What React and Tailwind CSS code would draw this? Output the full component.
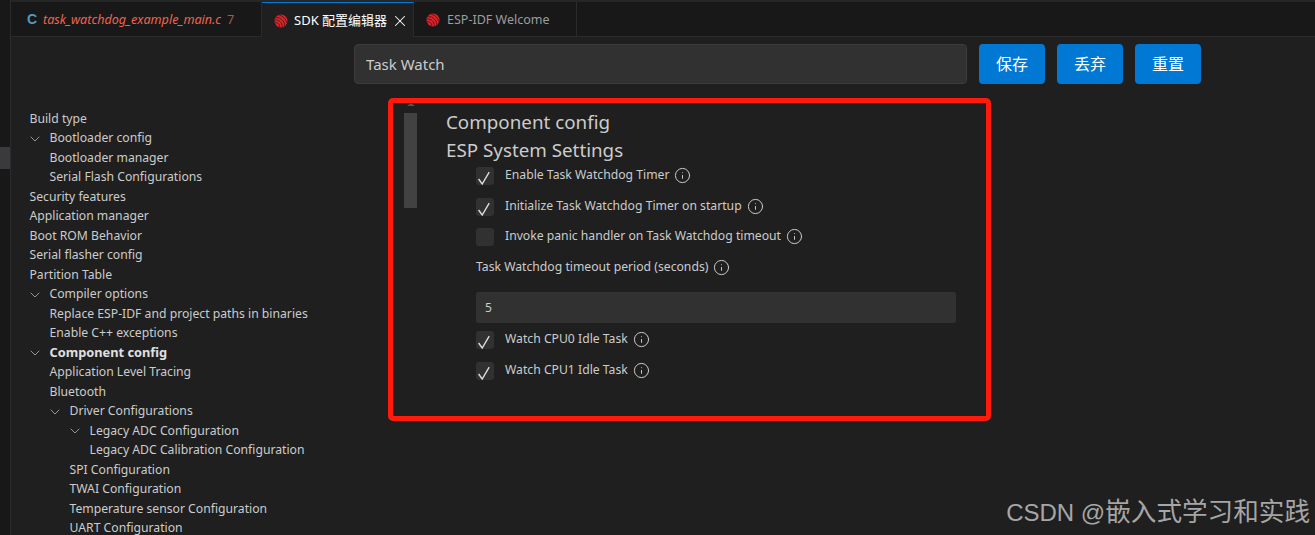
import React from 'react';
import { ChevronDown, Info, X } from 'lucide-react';

const FONT = "font-['Noto_Sans','Noto_Sans_CJK_SC',sans-serif]";

// indent classes per tree level
const LEVELS = ['pl-[18.5px]', 'pl-[38.5px]', 'pl-[58.5px]', 'pl-[78.5px]'];

const TREE = [
  { label: 'Build type', level: 0 },
  { label: 'Bootloader config', level: 1, open: true },
  { label: 'Bootloader manager', level: 1 },
  { label: 'Serial Flash Configurations', level: 1 },
  { label: 'Security features', level: 0 },
  { label: 'Application manager', level: 0 },
  { label: 'Boot ROM Behavior', level: 0 },
  { label: 'Serial flasher config', level: 0 },
  { label: 'Partition Table', level: 0 },
  { label: 'Compiler options', level: 1, open: true },
  { label: 'Replace ESP-IDF and project paths in binaries', level: 1 },
  { label: 'Enable C++ exceptions', level: 1 },
  { label: 'Component config', level: 1, open: true, bold: true },
  { label: 'Application Level Tracing', level: 1 },
  { label: 'Bluetooth', level: 1 },
  { label: 'Driver Configurations', level: 2, open: true },
  { label: 'Legacy ADC Configuration', level: 3, open: true },
  { label: 'Legacy ADC Calibration Configuration', level: 3 },
  { label: 'SPI Configuration', level: 2 },
  { label: 'TWAI Configuration', level: 2 },
  { label: 'Temperature sensor Configuration', level: 2 },
  { label: 'UART Configuration', level: 2 },
];

// Espressif mark, red disc with dark arcs
const EspLogo = () => (
  <svg width="14" height="14" viewBox="0 0 14 14" className="shrink-0">
    <circle cx="7" cy="7" r="6.5" fill="#d9262c" />
    <g fill="none" stroke="#5c1214" strokeWidth="0.9" strokeLinecap="round">
      <path d="M2.5 3.6C6.8 3.2 10.8 7 10.5 11.5" />
      <path d="M1.4 6C5 5.6 8.4 8.6 8.2 12.6" />
      <path d="M1.5 8.6C3.8 8.4 5.8 10.2 5.8 12.6" />
      <path d="M5.5 1.2C9 1.8 12 4.8 12.6 8.5" />
    </g>
  </svg>
);

const Check = () => (
  <svg width="18" height="18" viewBox="0 0 18 18" fill="none" className="block overflow-visible">
    <path d="M2.6 12 L6.2 17 L13.2 5.2" stroke="#dddddd" strokeWidth="1.4" />
  </svg>
);

const CheckRow = ({ label, checked, className }) => (
  <div className={`flex items-center h-[18px] ${className}`}>
    <span className="w-[18px] h-[18px] bg-[#313131] rounded-[3px] shrink-0">
      {checked && <Check />}
    </span>
    <div className="flex items-center pb-[2px] ml-[11px] gap-[5px]">
      <span className="text-[12.2px] text-[#cccccc] whitespace-nowrap">{label}</span>
      <Info size={17} strokeWidth={1.4} className="text-[#cccccc] shrink-0" />
    </div>
  </div>
);

const App = () => {
  return (
    <div className={`relative flex h-[535px] w-[1315px] overflow-hidden bg-[#1f1f1f] ${FONT}`}>
      {/* Left strip */}
      <div className="w-[11px] shrink-0 bg-[#181818] border-r border-[#2b2b2b] pt-[147px]">
        <div className="h-[22px] bg-[#3a3a3d] w-[10px]"></div>
      </div>

      <div className="flex-1 min-w-0 flex flex-col">
        {/* Tabs */}
        <div className="flex h-[37px] shrink-0 bg-[#181818] border-t-2 border-b border-t-[#262626] border-b-[#2b2b2b]">
          <div className="flex items-center w-[251px] pl-[16px] pt-[2px] border-r border-[#2b2b2b]">
            <span className="w-[16px] text-[14px] leading-none font-bold text-[#519aba] font-['Liberation_Sans',sans-serif] -mt-[3px]">C</span>
            <span className="text-[12.6px] italic text-[#f0634f] whitespace-nowrap">task_watchdog_example_main.c</span>
            <span className="ml-[6px] text-[12.5px] text-[#a8584e]">7</span>
          </div>
          <div className="flex items-center w-[152px] -mb-px pl-[12px] pt-[2px] bg-[#1f1f1f] border-t border-[#0078d4] border-r-[#2b2b2b] border-r">
            <EspLogo />
            <span className="ml-[6px] text-[13px] text-white whitespace-nowrap">SDK 配置编辑器</span>
            <X size={18} strokeWidth={1.4} className="ml-[4px] text-white" />
          </div>
          <div className="flex items-center w-[163px] pl-[12px] pt-[2px] border-r border-[#2b2b2b]">
            <EspLogo />
            <span className="ml-[7px] text-[12.5px] text-[#9d9d9d] whitespace-nowrap">ESP-IDF Welcome</span>
          </div>
        </div>

        {/* Search and actions */}
        <div className="flex h-[61px] shrink-0 pt-[7px] pl-[343px] gap-[12px]">
          <input
            readOnly
            value="Task Watch"
            className="w-[613px] h-[40px] px-[11px] bg-[#313131] border border-[#3c3c3c] rounded-[4px] text-[15px] text-[#cccccc] outline-none"
          />
          {['保存', '丢弃', '重置'].map((b) => (
            <button key={b} className="w-[66px] h-[40px] bg-[#0078d4] rounded-[4px] text-[16px] text-white">{b}</button>
          ))}
        </div>

        <div className="flex items-start flex-1 min-h-0">
          {/* Config tree */}
          <div className="w-[377px] shrink-0 pt-[11.25px]">
            {TREE.map((item) => (
              <div
                key={item.label}
                className={`flex items-center h-[19.5px] whitespace-nowrap ${LEVELS[item.level]} ${item.bold ? 'text-[12.8px] font-bold text-[#e0e0e0]' : 'text-[12.2px] text-[#cccccc]'}`}
              >
                {item.open && (
                  <ChevronDown size={16} strokeWidth={1.4} className="-ml-[23px] mr-[7px] shrink-0 text-[#a0a0a0]" />
                )}
                {item.label}
              </div>
            ))}
          </div>

          {/* Highlighted settings panel */}
          <div className="flex w-[603px] h-[323px] shrink-0 border-[5px] border-[#ff1a0c] rounded-[5px]">
            <div className="w-[13px] ml-[11px] shrink-0">
              <div className="mx-auto w-0 h-0 border-x-[4px] border-x-transparent border-b-[3px] border-b-[#555555]"></div>
              <div className="mt-[7px] h-[95px] bg-[#424242]"></div>
            </div>
            <div className="ml-[29px] pt-[5px] flex-1 min-w-0">
              <h2 className="text-[18.8px] leading-[28px] text-[#cccccc]">Component config</h2>
              <h2 className="text-[18.8px] leading-[28px] text-[#cccccc]">ESP System Settings</h2>
              <div className="pl-[30px]">
                <CheckRow className="mt-[3px]" checked label="Enable Task Watchdog Timer" />
                <CheckRow className="mt-[13px]" checked label="Initialize Task Watchdog Timer on startup" />
                <CheckRow className="mt-[12px]" label="Invoke panic handler on Task Watchdog timeout" />
                <div className="flex items-center h-[20px] mt-[11px] gap-[5px]">
                  <span className="text-[12.2px] text-[#cccccc] whitespace-nowrap">Task Watchdog timeout period (seconds)</span>
                  <Info size={17} strokeWidth={1.4} className="text-[#cccccc] shrink-0" />
                </div>
                <input
                  readOnly
                  value="5"
                  className="block mt-[15px] w-[480px] h-[31px] px-[9px] bg-[#313131] rounded-[2px] text-[12px] text-[#cccccc] outline-none"
                />
                <CheckRow className="mt-[8px]" checked label="Watch CPU0 Idle Task" />
                <CheckRow className="mt-[13px]" checked label="Watch CPU1 Idle Task" />
              </div>
            </div>
          </div>
        </div>
      </div>

      {/* Watermark */}
      <div className="absolute right-[5px] bottom-[6px] text-[25.6px] leading-[32px] text-[#a6a6a6] whitespace-nowrap font-['Liberation_Sans','Noto_Sans_CJK_SC',sans-serif]">
        <span className="text-[24px]">CSDN @</span>嵌入式学习和实践
      </div>
    </div>
  );
};

export default App;
